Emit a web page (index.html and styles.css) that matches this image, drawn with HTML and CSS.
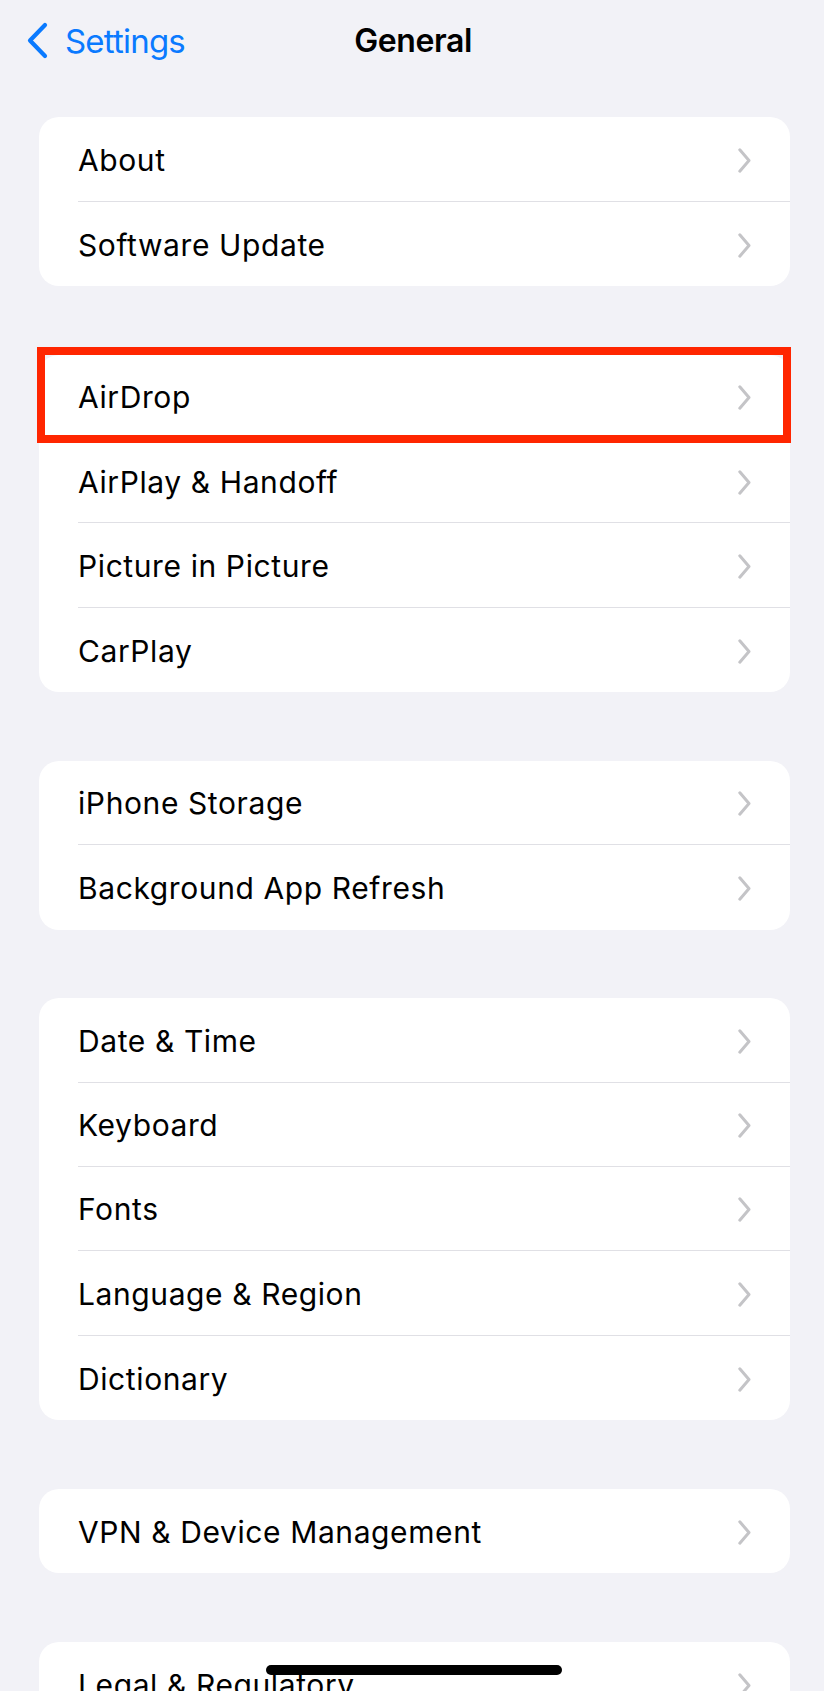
FILE: index.html
```html
<!DOCTYPE html>
<html lang="en">
<head>
<meta charset="utf-8">
<title>General</title>
<link rel="stylesheet" href="styles.css">
</head>
<body>
<div class="screen">
  <header class="nav">
    <a class="back" href="#">
      <svg class="back-icon" width="22" height="37" viewBox="0 0 22 37"><path d="M19 3 L4 18.5 L19 34" fill="none" stroke="#0a7aff" stroke-width="4.2" stroke-linecap="round" stroke-linejoin="round"/></svg>
      <span>Settings</span>
    </a>
    <h1 class="title">General</h1>
  </header>

  <main class="groups">
    <section class="card">
      <div class="row"><div class="row-inner"><span class="label">About</span><svg class="chev" width="13" height="25" viewBox="0 0 13 25"><path d="M1.8 1.8 L11 12.5 L1.8 23.2" fill="none" stroke="#c4c4c7" stroke-width="3" stroke-linecap="round" stroke-linejoin="round"/></svg></div></div>
      <div class="row"><div class="row-inner"><span class="label">Software Update</span><svg class="chev" width="13" height="25" viewBox="0 0 13 25"><path d="M1.8 1.8 L11 12.5 L1.8 23.2" fill="none" stroke="#c4c4c7" stroke-width="3" stroke-linecap="round" stroke-linejoin="round"/></svg></div></div>
    </section>

    <section class="card">
      <div class="row highlighted"><div class="row-inner"><span class="label">AirDrop</span><svg class="chev" width="13" height="25" viewBox="0 0 13 25"><path d="M1.8 1.8 L11 12.5 L1.8 23.2" fill="none" stroke="#c4c4c7" stroke-width="3" stroke-linecap="round" stroke-linejoin="round"/></svg></div></div>
      <div class="row"><div class="row-inner"><span class="label">AirPlay &amp; Handoff</span><svg class="chev" width="13" height="25" viewBox="0 0 13 25"><path d="M1.8 1.8 L11 12.5 L1.8 23.2" fill="none" stroke="#c4c4c7" stroke-width="3" stroke-linecap="round" stroke-linejoin="round"/></svg></div></div>
      <div class="row"><div class="row-inner"><span class="label">Picture in Picture</span><svg class="chev" width="13" height="25" viewBox="0 0 13 25"><path d="M1.8 1.8 L11 12.5 L1.8 23.2" fill="none" stroke="#c4c4c7" stroke-width="3" stroke-linecap="round" stroke-linejoin="round"/></svg></div></div>
      <div class="row"><div class="row-inner"><span class="label">CarPlay</span><svg class="chev" width="13" height="25" viewBox="0 0 13 25"><path d="M1.8 1.8 L11 12.5 L1.8 23.2" fill="none" stroke="#c4c4c7" stroke-width="3" stroke-linecap="round" stroke-linejoin="round"/></svg></div></div>
    </section>

    <section class="card">
      <div class="row"><div class="row-inner"><span class="label">iPhone Storage</span><svg class="chev" width="13" height="25" viewBox="0 0 13 25"><path d="M1.8 1.8 L11 12.5 L1.8 23.2" fill="none" stroke="#c4c4c7" stroke-width="3" stroke-linecap="round" stroke-linejoin="round"/></svg></div></div>
      <div class="row"><div class="row-inner"><span class="label">Background App Refresh</span><svg class="chev" width="13" height="25" viewBox="0 0 13 25"><path d="M1.8 1.8 L11 12.5 L1.8 23.2" fill="none" stroke="#c4c4c7" stroke-width="3" stroke-linecap="round" stroke-linejoin="round"/></svg></div></div>
    </section>

    <section class="card">
      <div class="row"><div class="row-inner"><span class="label">Date &amp; Time</span><svg class="chev" width="13" height="25" viewBox="0 0 13 25"><path d="M1.8 1.8 L11 12.5 L1.8 23.2" fill="none" stroke="#c4c4c7" stroke-width="3" stroke-linecap="round" stroke-linejoin="round"/></svg></div></div>
      <div class="row"><div class="row-inner"><span class="label">Keyboard</span><svg class="chev" width="13" height="25" viewBox="0 0 13 25"><path d="M1.8 1.8 L11 12.5 L1.8 23.2" fill="none" stroke="#c4c4c7" stroke-width="3" stroke-linecap="round" stroke-linejoin="round"/></svg></div></div>
      <div class="row"><div class="row-inner"><span class="label">Fonts</span><svg class="chev" width="13" height="25" viewBox="0 0 13 25"><path d="M1.8 1.8 L11 12.5 L1.8 23.2" fill="none" stroke="#c4c4c7" stroke-width="3" stroke-linecap="round" stroke-linejoin="round"/></svg></div></div>
      <div class="row"><div class="row-inner"><span class="label">Language &amp; Region</span><svg class="chev" width="13" height="25" viewBox="0 0 13 25"><path d="M1.8 1.8 L11 12.5 L1.8 23.2" fill="none" stroke="#c4c4c7" stroke-width="3" stroke-linecap="round" stroke-linejoin="round"/></svg></div></div>
      <div class="row"><div class="row-inner"><span class="label">Dictionary</span><svg class="chev" width="13" height="25" viewBox="0 0 13 25"><path d="M1.8 1.8 L11 12.5 L1.8 23.2" fill="none" stroke="#c4c4c7" stroke-width="3" stroke-linecap="round" stroke-linejoin="round"/></svg></div></div>
    </section>

    <section class="card">
      <div class="row"><div class="row-inner"><span class="label">VPN &amp; Device Management</span><svg class="chev" width="13" height="25" viewBox="0 0 13 25"><path d="M1.8 1.8 L11 12.5 L1.8 23.2" fill="none" stroke="#c4c4c7" stroke-width="3" stroke-linecap="round" stroke-linejoin="round"/></svg></div></div>
    </section>

    <section class="card">
      <div class="row"><div class="row-inner"><span class="label">Legal &amp; Regulatory</span><svg class="chev" width="13" height="25" viewBox="0 0 13 25"><path d="M1.8 1.8 L11 12.5 L1.8 23.2" fill="none" stroke="#c4c4c7" stroke-width="3" stroke-linecap="round" stroke-linejoin="round"/></svg></div></div>
    </section>
  </main>

  <div class="home-indicator"></div>
</div>
</body>
</html>
```

FILE: styles.css
```css
html, body {
  margin: 0;
  padding: 0;
  height: 100%;
  overflow: hidden;
  background: #f2f2f7;
}

body {
  font-family: Inter, "Noto Sans", "Liberation Sans", sans-serif;
  color: #000;
  -webkit-font-smoothing: antialiased;
}

.screen {
  position: relative;
  width: 824px;
  height: 1691px;
  overflow: hidden;
  background: #f2f2f7;
}

.nav {
  position: relative;
  height: 117.3px;
  box-sizing: border-box;
}

.back {
  position: absolute;
  left: 26px;
  top: 22px;
  display: flex;
  align-items: center;
  gap: 17px;
  height: 37px;
  color: #0a7aff;
  text-decoration: none;
  font-size: 33px;
  letter-spacing: -0.8px;
}

.back-icon {
  display: block;
  flex: none;
}

.title {
  position: absolute;
  left: 0;
  right: 0;
  top: 22px;
  margin: 0;
  height: 37px;
  line-height: 37px;
  text-align: center;
  font-size: 32px;
  font-weight: 600;
  letter-spacing: -0.4px;
  padding-left: 2px;
}

.groups {
  display: flex;
  flex-direction: column;
  gap: 68.6px;
  padding: 0 34px 0 39px;
}

.card {
  background: #fff;
  border-radius: 20px;
  overflow: hidden;
}

.row {
  position: relative;
  height: 84.4px;
  padding-left: 39px;
  box-sizing: border-box;
}

.row-inner {
  height: 100%;
  display: flex;
  align-items: center;
  justify-content: space-between;
  padding-right: 39px;
  box-sizing: border-box;
  border-bottom: 1px solid #e0e0e5;
}

.row:last-child .row-inner {
  border-bottom: none;
}

.label {
  font-size: 30px;
  letter-spacing: 0.6px;
  line-height: 1;
  margin-top: 1.5px;
}

.chev {
  display: block;
  flex: none;
  margin-top: 2.6px;
}

.highlighted::after {
  content: "";
  position: absolute;
  left: -2px;
  right: -1px;
  top: -8px;
  bottom: -4px;
  border: 8px solid #ff2600;
  pointer-events: none;
}

.card:has(.highlighted) {
  overflow: visible;
}

.home-indicator {
  position: absolute;
  left: 266px;
  top: 1665px;
  width: 296px;
  height: 10px;
  border-radius: 5px;
  background: #000;
}
```
